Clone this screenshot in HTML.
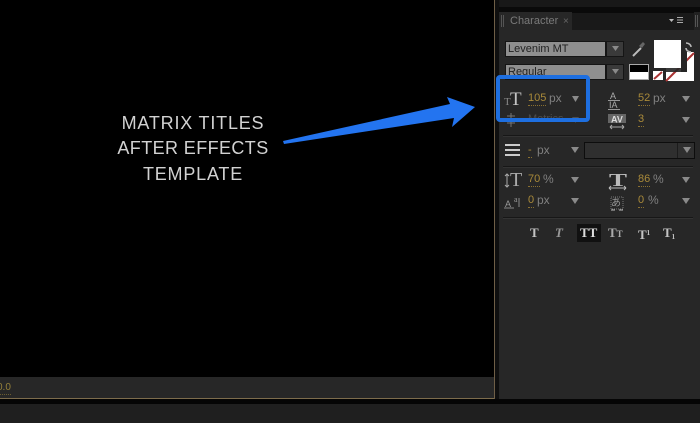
<!DOCTYPE html>
<html><head><meta charset="utf-8">
<style>
html,body{margin:0;padding:0;background:#000}
#p{position:relative;width:700px;height:423px;overflow:hidden;background:#0a0a0a;font-family:"Liberation Sans",sans-serif}
#p div{position:absolute}
.t{white-space:nowrap;font-size:11px;line-height:13px;color:#8c8c8c}
.y{color:#a98a3a;border-bottom:1px dotted #8a7030;line-height:12px;padding-bottom:1px}
.g{color:#808080;font-size:12px}
.h{position:absolute;height:1px;background:#171717;left:503px;width:190px;box-shadow:0 1px 0 #333}
.big{position:absolute;left:100px;width:186px;text-align:center;color:#d2d2d2;font-size:18px;line-height:20px;white-space:nowrap;letter-spacing:.8px;filter:blur(.35px)}
svg{position:absolute;left:0;top:0}
.b{font-family:"Liberation Serif",serif;font-weight:bold;color:#c4c4c4;white-space:nowrap;font-size:13px;line-height:14px}
.i{font-family:"Liberation Serif",serif;white-space:nowrap;position:absolute}
</style></head><body>
<div id="p">
<div style="left:0;top:0;width:700px;height:7px;background:#181818"></div>
<div style="left:0;top:0;width:494px;height:377px;background:#000"></div>
<div style="left:0;top:377px;width:494px;height:21px;background:#272727"></div>
<div style="left:0;top:398px;width:496px;height:1px;background:#7d6c4c"></div>
<div style="left:494px;top:0;width:1px;height:399px;background:#6f5f47"></div>
<div style="left:0;top:399px;width:700px;height:5px;background:#050505"></div>
<div style="left:0;top:404px;width:700px;height:19px;background:#1f1f1f"></div>
<div style="left:495px;top:0;width:4px;height:399px;background:#0f0f0f"></div>
<div style="left:499px;top:30px;width:201px;height:369px;background:#272727"></div>
<div style="left:499px;top:12px;width:73px;height:18px;background:#272727"></div>
<div style="left:572px;top:13px;width:122px;height:17px;background:#191919"></div>
<div style="left:694px;top:12px;width:6px;height:18px;background:#222"></div>
<div class="t" style="left:510px;top:15px;font-size:11px;color:#7a7a7a">Character</div>
<div class="t" style="left:563px;top:15px;font-size:10px;color:#666">×</div>

<div style="left:505px;top:41px;width:99px;height:14px;background:#8f8f8f;border:1px solid #151515;overflow:hidden"><div class="t" style="left:2px;top:1px;color:#222;font-size:11px">Levenim MT</div></div>
<div style="left:606px;top:41px;width:16px;height:14px;background:#3a3a3a;border:1px solid #151515"></div>
<div style="left:505px;top:64px;width:99px;height:14px;background:#8f8f8f;border:1px solid #151515;overflow:hidden"><div class="t" style="left:2px;top:1px;color:#222;font-size:11px">Regular</div></div>
<div style="left:606px;top:64px;width:16px;height:14px;background:#3a3a3a;border:1px solid #151515"></div>

<div style="left:629px;top:64px;width:18px;height:8px;background:#000;border:1px solid #aaa;border-bottom:0"></div>
<div style="left:629px;top:72px;width:18px;height:7px;background:#fff;border:1px solid #aaa;border-top:0"></div>

<div class="t y" style="left:528px;top:92px">105</div><div class="t g" style="left:549px;top:92px">px</div>
<div class="t" style="left:528px;top:113px;color:#4d4d4d">Metrics</div>
<div class="t y" style="left:638px;top:92px">52</div><div class="t g" style="left:653px;top:92px">px</div>
<div class="t y" style="left:638px;top:113px">3</div>

<div class="h" style="top:135px"></div>
<div class="t y" style="left:528px;top:144px">-</div><div class="t g" style="left:537px;top:144px">px</div>
<div style="left:584px;top:142px;width:109px;height:15px;background:#2f2f2f;border:1px solid #0d0d0d"></div>
<div style="left:677px;top:143px;width:1px;height:15px;background:#1c1c1c"></div>
<div class="h" style="top:166px"></div>
<div class="t y" style="left:528px;top:173px">70</div><div class="t g" style="left:543px;top:173px">%</div>
<div class="t y" style="left:638px;top:173px">86</div><div class="t g" style="left:653px;top:173px">%</div>
<div class="t y" style="left:528px;top:194px">0</div><div class="t g" style="left:537px;top:194px">px</div>
<div class="t y" style="left:638px;top:194px">0</div><div class="t g" style="left:648px;top:194px">%</div>
<div class="h" style="top:217px"></div>

<div style="left:577px;top:224px;width:24px;height:18px;background:#111"></div>
<div class="b" style="left:530px;top:226px">T</div>
<div class="b" style="left:555px;top:226px;font-style:italic;color:#999">T</div>
<div class="b" style="left:580px;top:226px;color:#ddd">TT</div>
<div class="b" style="left:608px;top:226px;color:#aaa">T<span style="font-size:9px">T</span></div>
<div class="b" style="left:638px;top:226px">T<span style="font-size:7px;vertical-align:4px">1</span></div>
<div class="b" style="left:663px;top:226px">T<span style="font-size:7px;vertical-align:-2px">1</span></div>

<div class="i" style="left:510px;top:90px;font-size:19px;line-height:20px;color:#c4c4c4">T</div>
<div class="i" style="left:504px;top:96px;font-size:11px;line-height:12px;color:#888">T</div>
<div class="i" style="left:510px;top:170px;font-size:20px;line-height:20px;color:#aaa">T</div>
<div class="i" style="left:612px;top:171px;font-weight:bold;font-size:18px;line-height:18px;color:#bbb;transform:scaleX(1.5)">T</div>
<div class="i" style="left:611px;top:196px;font-family:'Noto Sans CJK JP',sans-serif;font-size:10px;line-height:12px;color:#999">あ</div>
<div class="i" style="left:514px;top:196px;font-size:8px;line-height:8px;color:#999">a</div>
<div class="i" style="left:505px;top:199px;font-family:'Liberation Sans',sans-serif;font-size:9px;line-height:10px;color:#999">A</div>
<div class="i" style="left:610px;top:92px;font-family:'Liberation Sans',sans-serif;font-size:9px;line-height:9px;color:#aaa">A</div>
<div class="i" style="left:609px;top:101px;font-family:'Liberation Sans',sans-serif;font-size:9px;line-height:9px;color:#aaa">IA</div>

<svg width="700" height="423" viewBox="0 0 700 423">
<g fill="#8a8a8a">
<path d="M612 46h7l-3.500 5z"/><path d="M612 69h7l-3.500 5z"/>
<path d="M572 96h7l-3.500 6z"/><path d="M572 117h7l-3.500 6z" opacity=".4"/><path d="M682 96h8l-4 6z"/><path d="M682 117h8l-4 6z"/>
<path d="M571 147h8l-4 6z"/><path d="M683 147h8l-4 6z"/>
<path d="M571 177h8l-4 6z"/><path d="M682 177h8l-4 6z"/><path d="M571 198h8l-4 6z"/><path d="M682 198h8l-4 6z"/>
<path d="M669 19h5l-2.500 3z" fill="#bbb"/>
</g>
<path d="M677 17.500h6M677 20h6M677 22.500h6" stroke="#aaa" stroke-width="1"/>
<g fill="#555"><rect x="501" y="15" width="1" height="12"/><rect x="503" y="15" width="1" height="12"/><rect x="695" y="15" width="1" height="12"/><rect x="697" y="15" width="1" height="12"/></g>
<!-- eyedropper -->
<path d="M633 56l8-8" stroke="#bbb" stroke-width="2"/><path d="M639 46l4-4 2 2-3 4z" fill="#666"/>
<!-- swatches -->
<rect x="666" y="52" width="28" height="29" fill="#fff"/>
<path d="M666 81L694 53" stroke="#a33" stroke-width="2"/>
<rect x="681" y="52" width="6" height="20" fill="#262626"/>
<rect x="666" y="68" width="21" height="4" fill="#262626" opacity=".9"/>
<rect x="654" y="40" width="27" height="28" fill="#fff"/>
<rect x="653" y="71" width="10" height="9" fill="#fff"/>
<path d="M654 79l8-7" stroke="#a33" stroke-width="2"/>
<path d="M686 43c3 0 5 2 5 4M691 52c-3 0-5-2-5-4" stroke="#bbb" stroke-width="1.500" fill="none"/>
<!-- icons -->
<g stroke="#999" fill="none">
<path d="M507 116h8M507 123h8M511 113v14" opacity=".7"/>
<path d="M608 100.500h12M608 109.500h12"/>
</g>
<rect x="608" y="114" width="18" height="9" fill="#666"/>
<text x="611" y="122.500" font-family="Liberation Sans" font-weight="bold" font-size="9" fill="#ddd">AV</text>
<path d="M610 127h14M610 127l2-2M610 127l2 2M624 127l-2-2M624 127l-2 2" stroke="#aaa" fill="none"/>
<path d="M505 145h15M505 150h15M505 155h15" stroke="#ccc" stroke-width="2"/>
<path d="M507 174v13M505 176l2-2 2 2M505 185l2 2 2-2" stroke="#aaa" fill="none"/>
<path d="M609 188h17M609 188l2-2M609 188l2 2M626 188l-2-2M626 188l-2 2" stroke="#bbb" fill="none"/>
<path d="M504 208h10M519 198v9" stroke="#888" fill="none"/>
<rect x="611" y="197" width="12" height="12" fill="none" stroke="#777" stroke-dasharray="1 1"/>
<path d="M611 210h4M623 210h-4" stroke="#bbb"/>
<!-- arrow -->
<path d="M283 141L450 104 447 97 475 107 452 127 454 118 284 144Z" fill="#2374f0"/>
<!-- blue box -->
<rect x="498" y="77" width="90" height="43" rx="2" fill="none" stroke="#1e6fe0" stroke-width="4"/>
</svg>

<div class="big" style="top:113px">MATRIX TITLES</div>
<div class="big" style="top:138px;letter-spacing:.4px">AFTER EFFECTS</div>
<div class="big" style="top:164px">TEMPLATE</div>
<div class="t" style="left:-3px;top:381px;color:#94803a;font-size:10px;border-bottom:1px dotted #6a5c30">0.0</div>
</div>
</body></html>
